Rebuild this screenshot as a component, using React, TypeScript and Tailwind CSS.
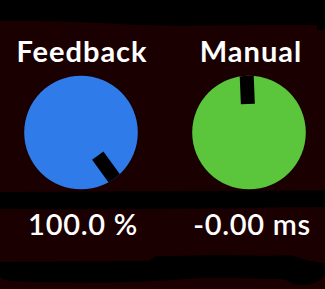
import React from "react";

function Knob({ color, angle, id }: { color: string; angle: number; id: string }) {
  return (
    <svg width="114" height="115" viewBox="-57 -57.5 114 115" className="block">
      <defs>
        <clipPath id={id}>
          <circle cx="0" cy="0" r="56.8" />
        </clipPath>
      </defs>
      <circle cx="0" cy="0" r="56.8" fill={color} />
      <g clipPath={`url(#${id})`}>
        <rect x="-7" y="-60" width="14" height="31.5" fill="#000" transform={`rotate(${angle})`} />
      </g>
    </svg>
  );
}

function Band({ h, d }: { h: number; d: string }) {
  return (
    <svg width="325" height={h} viewBox={`0 0 325 ${h}`} className="block shrink-0">
      <path d={d} fill="#000" />
    </svg>
  );
}

export default function App() {
  const font = { fontFamily: "Lato, 'Open Sans', sans-serif" };
  return (
    <div className="w-[325px] h-[289px] bg-[#1a0000] flex flex-col overflow-hidden" style={font}>
      <Band
        h={30}
        d="M0 0 H325 V30 H317 V25 C300 25 250 25 200 25.5 C170 26 150 25.5 120 24 C90 22 60 21 0 21 Z"
      />
      <div className="flex pl-[16px] gap-[36px] mt-[4px]">
        <div className="w-[132px] text-center text-white font-bold text-[29px] leading-[34px] tracking-[1px]">Feedback</div>
        <div className="w-[134px] text-center text-white font-bold text-[29px] leading-[34px] tracking-[1px]">Manual</div>
      </div>
      <div className="flex pl-[24px] gap-[54px] mt-[7px]">
        <Knob color="#2f7be9" angle={144} id="k1" />
        <Knob color="#5bc53b" angle={-2.3} id="k2" />
      </div>
      <Band
        h={20}
        d="M0 2 C80 1.5 200 1 325 0.5 V17 C300 17.5 270 17 260 18 C200 19 100 19.5 0 19 Z"
      />
      <div className="flex pl-[16px] gap-[36px]">
        <div className="w-[134px] text-center text-white font-semibold text-[29px] leading-[28px] tracking-[0.7px]">100.0 %</div>
        <div className="w-[132px] text-center text-white font-semibold text-[29px] leading-[28px] tracking-[0.7px]">-0.00 ms</div>
      </div>
      <Band
        h={52}
        d="M0 24 C50 23.5 120 23.5 150 22.5 C153 20 155 18 160 18 C190 18 200 16.5 230 17 C260 18 280 18 287 17 C295 17 300 21 310 23 C318 24 322 25 325 25 V38 C318 44 312 47 300 47 C292 47 290 42 280 41 C250 40 220 40 200 40 C170 42 150 44 100 44.5 C60 45 20 44 10 43 C4 42 0 40 0 38 Z"
      />
    </div>
  );
}
